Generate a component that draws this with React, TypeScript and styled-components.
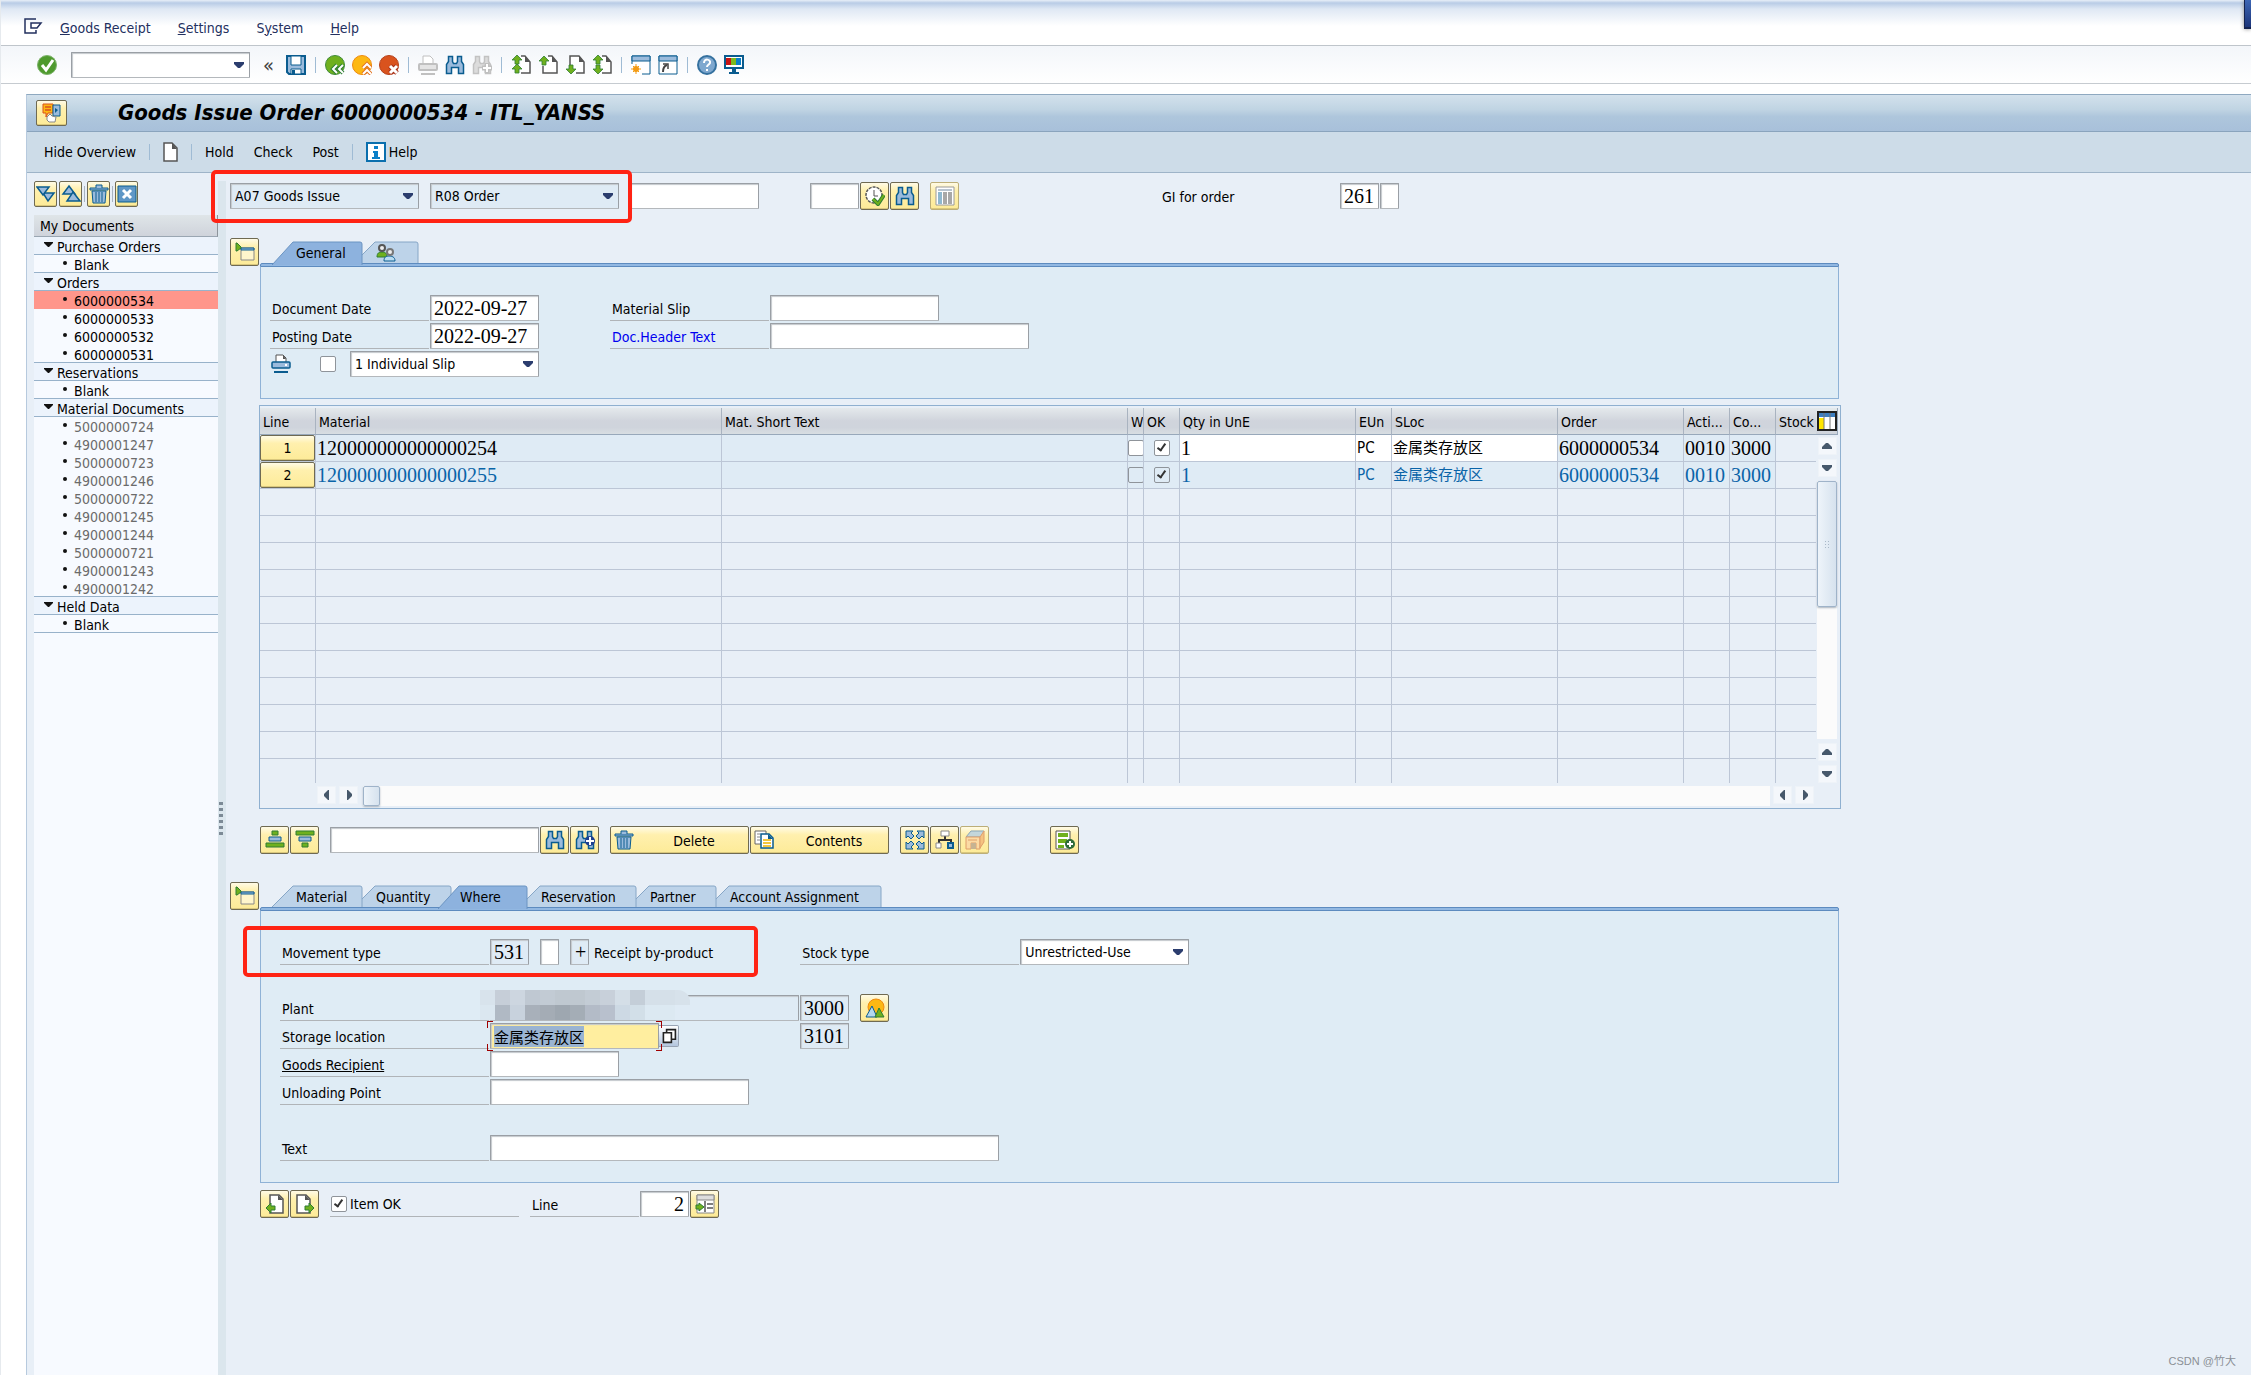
import React, { useEffect, useRef } from "react";
import styled, { createGlobalStyle, css } from "styled-components";

const sans = `"DejaVu Sans Condensed", "Noto Sans CJK SC", sans-serif`;
const serif = `"Liberation Serif", "Noto Sans CJK SC", serif`;

const Global = createGlobalStyle`
  *, *::before, *::after { box-sizing: border-box; }
  body { margin: 0; background: #fff; }
  button, input, select { font: inherit; color: inherit; margin: 0; }
  svg { display: block; flex: none; }
`;

/* ---------- icons ---------- */

const B = "#0a5c8f";
const L = "#9bbbdc";
const G = "#6fb01e";
const DG = "#2e7d32";
const K = "#555";

const up = (x: number, y: number) => `M${x} ${y}l5 5h-3v4h-4v-4h-3z`;
const down = (x: number, y: number) => `M${x} ${y}l5-5h-3v-4h-4v4h-3z`;
const binoculars = "M1.5 18.5v-9l2-3v-5h4v5l1 2h3l1-2v-5h4v5l2 3v9h-5v-6h-7v6z";
const fold = "M14 1l5 6h-5z";

const art: Record<string, React.ReactNode> = {
  menu: (
    <g fill="none" stroke="#23305f" strokeWidth="1.5">
      <path d="M13 3H2v14h11v-3" />
      <path d="M8 7h10l-4 5H8z" fill="#fff" />
    </g>
  ),
  ok: (
    <>
      <circle cx="10" cy="10" r="9.5" fill="#4f9a2e" stroke="#7cb36a" />
      <path d="M5 10l4 5 7-10" fill="none" stroke="#fff" strokeWidth="3" />
    </>
  ),
  save: (
    <>
      <path d="M1 1h18v18H3l-2-2z" fill={L} stroke={B} strokeWidth="2" />
      <path d="M5 1h10v9H5z" fill="#fff" stroke={B} />
      <path d="M5 14h10v5H5z" fill="#fff" stroke={B} />
      <path d="M6 15h3v4H6z" fill={B} />
    </>
  ),
  back: (
    <>
      <circle cx="10" cy="10" r="9.5" fill={G} stroke="#3f8a3a" />
      <path d="M12 10l-4 4 4 4M18 10l-4 4 4 4" fill="none" stroke={DG} strokeWidth="4" />
      <path d="M12 10l-4 4 4 4M18 10l-4 4 4 4" fill="none" stroke="#fff" strokeWidth="2" />
    </>
  ),
  exit: (
    <>
      <circle cx="10" cy="10" r="9.5" fill="#fdb813" stroke="#ee8a10" />
      <path d="M11 13l4-4 4 4M11 19l4-4 4 4" fill="none" stroke="#e2711d" strokeWidth="4" />
      <path d="M11 13l4-4 4 4M11 19l4-4 4 4" fill="none" stroke="#fff" strokeWidth="2" />
    </>
  ),
  cancel: (
    <>
      <circle cx="10" cy="10" r="9.5" fill="#d9531e" stroke="#b5401a" />
      <path d="M11 11l7 7M18 11l-7 7" stroke="#a8321a" strokeWidth="5" />
      <path d="M11 11l7 7M18 11l-7 7" stroke="#fff" strokeWidth="3" />
    </>
  ),
  printGrey: (
    <g fill="#e4e4e4" stroke="#c0c0c0">
      <path d="M5 8V1h7l3 3v4" fill="#fff" />
      <rect x="1" y="9" width="18" height="6" rx="1" strokeWidth="2" />
      <path d="M3 19h14" strokeWidth="2" />
    </g>
  ),
  print: (
    <g>
      <path d="M5 8V1h7l3 3v4" fill="#fff" stroke={K} />
      <path d="M12 1v4h3z" fill={K} />
      <rect x="1" y="8" width="18" height="6" rx="1" fill={L} stroke={B} strokeWidth="1.5" />
      <path d="M14 11h2" stroke="#fff" strokeWidth="2" />
      <path d="M3 18h14" stroke={B} strokeWidth="2" />
    </g>
  ),
  find: <path d={binoculars} fill={L} stroke={B} strokeWidth="1.5" />,
  findGrey: (
    <>
      <path d={binoculars} fill="#dcdcdc" stroke="#c2c2c2" strokeWidth="1.5" />
      <path d="M15 8v10M10 13h10" stroke="#c0c0c0" strokeWidth="5" />
      <path d="M15 9v8M11 13h8" stroke="#fff" strokeWidth="2" />
    </>
  ),
  findNext: (
    <>
      <path d={binoculars} fill={L} stroke={B} strokeWidth="1.5" />
      <circle cx="15" cy="11" r="5" fill="#1d3f8f" />
      <path d="M15 7v8M11 11h8" stroke="#fff" strokeWidth="2" />
    </>
  ),
  firstPage: (
    <>
      <path d="M10 1h4l5 6v11h-9" fill="#fff" stroke={K} strokeWidth="1.5" />
      <path d={fold} fill={K} />
      <path d={`${up(6, 0)}${up(6, 9)}`} fill={G} stroke={DG} strokeWidth="0.8" />
    </>
  ),
  prevPage: (
    <>
      <path d="M10 1h4l5 6v11H5v-7" fill="#fff" stroke={K} strokeWidth="1.5" />
      <path d={fold} fill={K} />
      <path d={up(6, 1)} fill={G} stroke={DG} strokeWidth="0.8" />
    </>
  ),
  nextPage: (
    <>
      <path d="M5 10V1h9l5 6v11h-8" fill="#fff" stroke={K} strokeWidth="1.5" />
      <path d={fold} fill={K} />
      <path d={down(6, 19)} fill={G} stroke={DG} strokeWidth="0.8" />
    </>
  ),
  lastPage: (
    <>
      <path d="M10 1h4l5 6v11h-9" fill="#fff" stroke={K} strokeWidth="1.5" />
      <path d={fold} fill={K} />
      <path d={`${up(6, 0)}${down(6, 19)}`} fill={G} stroke={DG} strokeWidth="0.8" />
    </>
  ),
  newSession: (
    <>
      <path d="M1 1h18v18H1z" fill="#fff" stroke={B} />
      <path d="M1 1h18v5H1z" fill={L} stroke={B} />
      <path d="M0 9h11v11H0z" fill="#fff" />
      <circle cx="5" cy="14" r="3" fill="#f39a12" />
      <path d="M5 9v10M0 14h10M2 11l6 6M8 11l-6 6" stroke="#f39a12" />
    </>
  ),
  shortcut: (
    <>
      <path d="M1 1h18v18H1z" fill="#fff" stroke={B} />
      <path d="M1 1h18v5H1z" fill={L} stroke={B} />
      <path d="M5 17c0-4 1-6 4-7" fill="none" stroke="#444" strokeWidth="2" />
      <path d="M5 9h5v5" fill="none" stroke="#444" strokeWidth="1.5" />
    </>
  ),
  help: (
    <>
      <circle cx="10" cy="10" r="9" fill="#7fa8cf" stroke="#35719f" strokeWidth="2" />
      <path d="M7 8c0-5 7-4 6 0-1 2-3 2-3 4M10 14v2" fill="none" stroke="#fff" strokeWidth="2" />
    </>
  ),
  monitor: (
    <>
      <path d="M0 0h20v14H0z" fill={B} />
      <path d="M2 2h16v10H2z" fill="#fff" />
      <path d="M2 3h5v7H2z" fill="#c81414" />
      <path d="M7 3h5v7H7z" fill="#7cba1e" />
      <path d="M12 3h5v7h-5z" fill="#0a7fc8" />
      <path d="M8 14h4v3h3v2H5v-2h3z" fill={B} />
    </>
  ),
  menuBox: (
    <>
      <path d="M1 1h10v9H6l-2 4v-4H1z" fill="#fdb813" stroke="#d9531e" />
      <path d="M3 4h6M3 7h6" stroke="#d9531e" strokeWidth="1.5" />
      <path d="M11 2h7v11h-7z" fill={L} stroke={B} />
      <path d="M13 5l3 2-3 3z" fill={B} />
      <path d="M5 17v-3l3-3 2 2 4 1-1 5H7z" fill="#fff" stroke="#888" />
    </>
  ),
  blankPage: (
    <>
      <path d="M4 1h8l5 5v13H4z" fill="#fff" stroke={K} strokeWidth="1.5" />
      <path d="M12 1v6h5z" fill={K} />
    </>
  ),
  info: (
    <>
      <path d="M1 1h18v18H1z" fill="#fff" stroke="#0a6fae" strokeWidth="2" />
      <path d="M8 4h4v3H8zM7 9h5v6h2v2H6v-2h2v-4H7z" fill="#0a7fc8" />
    </>
  ),
  expandAll: (
    <g fill={L} stroke={B} strokeWidth="1.5">
      <path d="M7 9h11l-6 8z" />
      <path d="M1 3h12l-6 8z" />
    </g>
  ),
  collapseAll: (
    <g fill={L} stroke={B} strokeWidth="1.5">
      <path d="M2 10h12L8 2z" />
      <path d="M6 17h13l-7-9z" />
    </g>
  ),
  trash: (
    <g fill={L} stroke={B}>
      <path d="M3 7h14l-1 12H4z" />
      <path d="M1 4h18v2H1z" />
      <path d="M7 4V1h6v3" />
      <path d="M7 8v10M10 8v10M13 8v10" stroke={B} />
    </g>
  ),
  closeBox: (
    <>
      <path d="M1 2h18v16H1z" fill="#5f97c6" stroke={B} />
      <path d="M6 6l8 8M14 6l-8 8" stroke="#fff" strokeWidth="3" />
    </>
  ),
  clock: (
    <>
      <circle cx="9" cy="9" r="8" fill="#fff" stroke={K} strokeWidth="1.5" strokeDasharray="3 1" />
      <path d="M9 4v6h4" fill="none" stroke={K} />
      <path d="M8 13l5 5 6-9" fill="none" stroke={DG} strokeWidth="4" />
      <path d="M8 13l5 5 6-9" fill="none" stroke={G} strokeWidth="2" />
    </>
  ),
  grid: (
    <>
      <path d="M1 1h18v18H1z" fill="#fff" stroke="#9a9a9a" />
      <path d="M3 3h14v2H3z" fill="#b8c4d0" />
      <path d="M3 6h4v12H3z" fill="#8fb8cf" />
      <path d="M8 6h4v12H8zM13 6h4v12h-4z" fill="#a8a8a8" />
    </>
  ),
  detail: (
    <>
      <path d="M6 6h13v12H6z" fill="#fff6cc" stroke="#888" />
      <path d="M6 6h13v2H6z" fill={L} stroke={B} />
      <path d="M1 1h1l4 4v1l-4 3H1z" fill={G} stroke={DG} />
    </>
  ),
  people: (
    <>
      <path d="M1 14c0-4 2-5 5-5s5 1 5 5z" fill={G} stroke={DG} />
      <circle cx="6" cy="5" r="3" fill="#eee" stroke={K} strokeWidth="2" />
      <path d="M8 18c0-4 2-5 5-5s6 1 6 5z" fill="#b9dcf2" stroke={B} />
      <circle cx="14" cy="9" r="3" fill="#eee" stroke="#777" strokeWidth="2" />
    </>
  ),
  insertTop: (
    <>
      <path d="M7 1h6v4H7z" fill={G} stroke={DG} />
      <path d="M4 7h12v4H4z" fill={L} stroke={B} />
      <path d="M1 13h18v4H1z" fill={G} stroke={DG} />
    </>
  ),
  insertBottom: (
    <>
      <path d="M1 1h18v4H1z" fill={G} stroke={DG} />
      <path d="M4 7h12v4H4z" fill={L} stroke={B} />
      <path d="M7 13h6v4H7z" fill={G} stroke={DG} />
    </>
  ),
  contents: (
    <>
      <path d="M1 1h11v13H1z" fill="#fff" stroke="#666" />
      <path d="M3 4h3M3 7h3M3 10h3" stroke="#888" />
      <path d="M7 4h8l4 4v10H7z" fill="#fff" stroke={B} strokeWidth="1.5" />
      <path d="M14 4v5h5z" fill={B} />
      <path d="M9 10h8M9 13h8M9 16h8" stroke="#f0b400" strokeWidth="1.5" />
    </>
  ),
  spread: (
    <g fill={L} stroke={B}>
      <path d="M1 1h7L6 3l3 3-3 3-3-3-2 2z" />
      <path d="M19 1h-7l2 2-3 3 3 3 3-3 2 2z" />
      <path d="M1 19h7l-2-2 3-3-3-3-3 3-2-2z" />
      <path d="M19 19h-7l2-2-3-3 3-3 3 3 2-2z" />
    </g>
  ),
  tree: (
    <>
      <path d="M10 6v4M4 13v-3h12v3" fill="none" stroke="#333" strokeWidth="2" />
      <path d="M6 1h8v5H6z" fill="#fff" stroke="#888" />
      <path d="M1 13h5v5H1z" fill="#fff" stroke="#888" />
      <path d="M13 13h5v5h-5z" fill={L} stroke={B} strokeWidth="2" />
    </>
  ),
  box: (
    <g opacity="0.8">
      <path d="M1 7l5-6h13l-3 6z" fill="#b5d0e5" stroke="#6f93b2" />
      <path d="M1 7h14v12h-4v-6H6v6H1z" fill="#fbd7a5" stroke="#d98c5c" />
      <path d="M6 13h5v6H6z" fill="#b9a58f" />
      <path d="M3 10h9" stroke="#d98c5c" />
      <path d="M15 7l4-6v11l-4 6z" fill="#f3b877" stroke="#d98c5c" />
    </g>
  ),
  addList: (
    <>
      <path d="M1 1h14v18H1z" fill="#fff" stroke={K} />
      <path d="M3 3h10v4H3zM3 9h9v4H3zM3 15h6v3H3z" fill={G} />
      <circle cx="15" cy="14" r="5" fill="#2c6b3a" />
      <path d="M15 11v6M12 14h6" stroke="#fff" strokeWidth="2" />
    </>
  ),
  landscape: (
    <>
      <circle cx="11" cy="9" r="8" fill="#fdb813" stroke="#f08a10" />
      <path d="M1 19l6-11 5 11z" fill="#b5d8ee" stroke={B} />
      <path d="M10 19l4-9 5 9z" fill={G} stroke={DG} />
    </>
  ),
  prevItem: (
    <>
      <path d="M5 1h9l4 4v14H5z" fill="#fff" stroke={K} strokeWidth="1.5" />
      <path d="M13 1v5h5z" fill={K} />
      <path d="M1 14l5-5v3h4v4H6v3z" fill={G} stroke={DG} />
    </>
  ),
  nextItem: (
    <>
      <path d="M2 1h9l4 4v14H2z" fill="#fff" stroke={K} strokeWidth="1.5" />
      <path d="M10 1v5h5z" fill={K} />
      <path d="M19 14l-5-5v3h-4v4h4v3z" fill={G} stroke={DG} />
    </>
  ),
  gotoLine: (
    <>
      <path d="M2 1h17v18H2z" fill="#fff" stroke="#888" />
      <path d="M2 1h17v5H2z" fill="#ddd" stroke="#888" />
      <path d="M10 7v11M12 10h6M12 14h6" stroke={K} strokeWidth="1.5" />
      <path d="M9 13l-5-4v2H1v4h3v2z" fill={G} stroke={DG} />
    </>
  ),
  f4: (
    <g fill="#fff" stroke="#222" strokeWidth="2">
      <path d="M7 2h11v12H7z" />
      <path d="M3 6h10v12H3z" />
    </g>
  ),
  config: (
    <>
      <path d="M1 1h18v18H1z" fill="#fff" stroke="#222" strokeWidth="2" />
      <path d="M2 7h5v11H2z" fill="#ffe500" />
      <path d="M2 2h16v4H2z" fill="#3f7fc0" />
      <path d="M7 2v16M13 2v16" stroke="#777" />
    </>
  ),
};

const Icon = ({ name, size = 20 }: { name: string; size?: number }) => (
  <svg width={size} height={size} viewBox="0 0 20 20" aria-hidden="true">
    {art[name]}
  </svg>
);

/* ---------- window chrome ---------- */

const Page = styled.div`
  position: relative;
  display: flex;
  flex-direction: column;
  min-height: 100vh;
  overflow: hidden;
  background: #fff;
  border-left: 1px solid #e6eaee;
  font: 14px/18px ${sans};
  color: #000;
`;

const MenuBar = styled.nav`
  display: flex;
  align-items: center;
  gap: 27px;
  height: 46px;
  padding: 10px 24px 0 22px;
  border-bottom: 1px solid #bfc5cb;
  background: linear-gradient(#e8eff8 0, #b9cce6 3px, #dfe8f4 9px, #fff 26px);
`;

const MenuIcon = styled.div`
  margin: -4px -10px 0 0;
`;

const MenuItem = styled.a`
  color: #23305f;
  text-decoration: none;
`;

const Toolbar = styled.div`
  display: flex;
  align-items: center;
  gap: 7px;
  height: 38px;
  padding: 0 36px;
  border-bottom: 1px solid #c6cbd0;
  background: linear-gradient(#f3f6fa, #fff);
`;

const FlatButton = styled.button`
  display: flex;
  align-items: center;
  gap: 3px;
  padding: 0;
  border: 0;
  background: none;
`;

const EnterButton = styled(FlatButton)`
  margin-right: 7px;
`;

const Collapse = styled(FlatButton)`
  margin: 0 4px 0 6px;
  width: 12px;
  font-size: 20px;
  color: #444;
`;

const Separator = styled.i`
  width: 1px;
  height: 16px;
  margin: 0 2px;
  background: #9fbbd4;
`;

const Corner = styled.div`
  position: absolute;
  top: 0;
  right: 0;
  width: 7px;
  height: 29px;
  background: linear-gradient(#3d66b5, #1b3479);
  border-left: 1px solid #14234f;
  border-bottom: 2px solid #14234f;
  box-shadow: 0 0 4px #888;
`;

const Frame = styled.div`
  flex: 1;
  display: flex;
  flex-direction: column;
  margin: 10px 0 0 25px;
  border-left: 1px solid #b7cade;
  border-top: 1px solid #8fa9c0;
  background: #e8eff7;
`;

const TitleBar = styled.header`
  display: flex;
  align-items: center;
  gap: 51px;
  height: 37px;
  padding: 0 9px;
  border-bottom: 1px solid #8aa4bd;
  background: linear-gradient(#d3e1ec, #c0d4e3 40%, #aec6dc 60%, #a8c0da);
`;

const Title = styled.h1`
  margin: 0;
  font: italic bold 22px/30px ${sans};
`;

const AppBar = styled.div`
  display: flex;
  align-items: center;
  gap: 11px;
  height: 41px;
  padding: 0 17px;
  border-bottom: 1px solid #9eb4c8;
  background: #cddce8;
`;

const AppActions = styled.div`
  display: flex;
  gap: 20px;
`;

/* ---------- shared controls ---------- */

const YellowButton = styled.button<{ $w?: number; $h?: number; $dim?: boolean }>`
  display: flex;
  flex: none;
  align-items: center;
  justify-content: center;
  width: ${(p) => p.$w ?? 29}px;
  height: ${(p) => p.$h ?? 28}px;
  padding: 0;
  border: 1px solid ${(p) => (p.$dim ? "#bcae78" : "#6f6a52")};
  border-radius: 2px;
  background: linear-gradient(#fffbe6, #fff0ae 30%, #fdeb98);
  box-shadow: inset 0 -1px 0 #d9c77c;
`;

const ActionButton = styled(YellowButton)`
  justify-content: flex-start;
  padding-left: 3px;
`;

const ActionText = styled.span`
  flex: 1;
  padding: 2px 0 0 6px;
  text-align: center;
`;

const Field = styled.input<{ $n: number; $tone?: "read" | "focus"; $face?: "sans"; $right?: boolean }>`
  flex: none;
  width: ${(p) => p.$n * 10 - 1}px;
  height: 26px;
  padding: 0 ${(p) => (p.$right ? 4 : 0)}px 0 ${(p) => (p.$n < 3 ? 4 : 3)}px;
  border: 1px solid #9a9fa5;
  border-bottom-color: #b4b8bc;
  border-radius: 1px;
  outline: 0;
  box-shadow: inset 1px 1px 1px #c4c8cc;
  background: ${(p) => (p.$tone === "read" ? "#dfebf5" : p.$tone === "focus" ? "#ffee9f" : "#fff")};
  font: ${(p) => (p.$face === "sans" ? `15px/20px ${sans}` : `20px/22px ${serif}`)};
  text-align: ${(p) => (p.$right ? "right" : "left")};
  &::selection {
    background: #9ab4d2;
    color: #000;
  }
`;

const SelectWrap = styled.span<{ $n: number }>`
  position: relative;
  flex: none;
  width: ${(p) => p.$n * 10 - 1}px;
  height: 26px;
  & > svg {
    position: absolute;
    right: 5px;
    top: 9px;
    pointer-events: none;
  }
`;

const SelectBox = styled.select<{ $read?: boolean }>`
  width: 100%;
  height: 26px;
  padding: 0 20px 0 4px;
  border: 1px solid #9a9fa5;
  border-bottom-color: #b4b8bc;
  border-radius: 1px;
  box-shadow: inset 1px 1px 1px #c4c8cc;
  appearance: none;
  background: ${(p) => (p.$read ? "#dfebf5" : "#fff")};
`;

const Select = ({ n, value, read, label, id }: { n: number; value?: string; read?: boolean; label?: string; id?: string }) => (
  <SelectWrap $n={n}>
    <SelectBox $read={read} aria-label={label} id={id}>
      <option>{value}</option>
    </SelectBox>
    <svg width="12" height="8" viewBox="0 0 12 8" aria-hidden="true">
      <path d="M1 1h10v2L7 7H5L1 3z" fill="#2b3d6e" />
    </svg>
  </SelectWrap>
);

const Check = styled.input.attrs({ type: "checkbox" })<{ $read?: boolean }>`
  position: relative;
  flex: none;
  width: 16px;
  height: 16px;
  appearance: none;
  border: 1px solid #8f949a;
  border-radius: 2px;
  background: ${(p) => (p.$read ? "#dfebf5" : "#fff")};
  &:checked::after {
    content: "";
    position: absolute;
    left: 4px;
    top: 1px;
    width: 5px;
    height: 9px;
    border: solid #333;
    border-width: 0 2px 2px 0;
    transform: rotate(35deg);
  }
`;

const Callout = styled.i<{ $x: number; $y: number; $w: number; $h: number }>`
  position: absolute;
  left: ${(p) => p.$x}px;
  top: ${(p) => p.$y}px;
  width: ${(p) => p.$w}px;
  height: ${(p) => p.$h}px;
  border: 4px solid #ff2314;
  border-radius: 5px;
  pointer-events: none;
  z-index: 30;
`;

/* ---------- overview tree ---------- */

const Body = styled.div`
  flex: 1;
  display: flex;
  padding-left: 7px;
`;

const Sidebar = styled.aside`
  flex: none;
  display: flex;
  flex-direction: column;
  width: 184px;
  padding-top: 8px;
`;

const SideTools = styled.div`
  display: flex;
  align-items: center;
  gap: 2px;
  height: 26px;
`;

const SideSep = styled.i`
  width: 1px;
  height: 16px;
  background: #a8b4c0;
`;

const TreeTitle = styled.h2`
  margin: 8px 0 0;
  height: 22px;
  padding-left: 6px;
  border-right: 1px solid #8d949b;
  border-bottom: 1px solid #9aa6b2;
  background: linear-gradient(#dfe5e8, #cfd3db);
  font: 14px/22px ${sans};
`;

const Tree = styled.ul`
  flex: 1;
  margin: 0;
  padding: 0;
  list-style: none;
  background: #f7faff;
  line-height: 20px;
  & ul {
    margin: 0;
    padding: 0;
    list-style: none;
    border-bottom: 1px solid #98b2ca;
  }
`;

const Group = styled.div`
  display: flex;
  gap: 4px;
  height: 18px;
  padding-left: 10px;
  border-bottom: 1px solid #98b2ca;
  background: #ecf3fc;
  & > svg {
    margin-top: 4px;
  }
`;

const Leaf = styled.li<{ $mark?: boolean; $grey?: boolean }>`
  height: 18px;
  padding-left: 40px;
  background: ${(p) => (p.$mark ? "#ff968b" : "none")};
  color: ${(p) => (p.$grey ? "#6b6b6b" : "#000")};
  &::before {
    content: "";
    float: left;
    width: 4px;
    height: 4px;
    margin: 6px 0 0 -11px;
    border-radius: 2px;
    background: #111;
  }
  &:last-child {
    height: 17px;
  }
`;

const Splitter = styled.div`
  flex: none;
  display: flex;
  align-items: flex-start;
  width: 8px;
  margin-top: 8px;
  padding: 621px 0 0 1px;
  background: #dbe6ed;
`;

const Grip = styled.i`
  width: 4px;
  height: 35px;
  background: repeating-linear-gradient(#7c8a96 0 3px, transparent 3px 6px);
`;

const groups = [
  { name: "Purchase Orders", items: ["Blank"] },
  { name: "Orders", items: ["6000000534", "6000000533", "6000000532", "6000000531"] },
  { name: "Reservations", items: ["Blank"] },
  {
    name: "Material Documents",
    grey: true,
    items: ["5000000724", "4900001247", "5000000723", "4900001246", "5000000722", "4900001245", "4900001244", "5000000721", "4900001243", "4900001242"],
  },
  { name: "Held Data", items: ["Blank"] },
];

/* ---------- work area ---------- */

const Main = styled.main`
  flex: 1;
  min-width: 0;
  max-width: 1615px;
  padding: 9px 0 0 4px;
`;

const Bar = styled.div<{ $indent?: boolean; $top?: number }>`
  position: relative;
  display: flex;
  align-items: center;
  gap: 1px;
  height: 28px;
  margin: ${(p) => p.$top ?? 0}px 0 0 ${(p) => (p.$indent ? 30 : 0)}px;
`;

const Space = styled.i<{ $n: number }>`
  flex: none;
  width: ${(p) => p.$n * 10 - 1}px;
`;

const Section = styled.section<{ $top: number }>`
  display: flex;
  align-items: flex-start;
  gap: 1px;
  margin: ${(p) => p.$top}px 2px 0 0;
`;

const TabBox = styled.div`
  flex: 1;
`;

const Tabs = styled.div`
  display: flex;
  align-items: flex-end;
  height: 25px;
  padding-left: 21px;
`;

const TabButton = styled.button<{ $w: number; $z: number; $on?: boolean; $lap: number; $pad: number }>`
  position: relative;
  z-index: ${(p) => p.$z};
  display: flex;
  align-items: center;
  width: ${(p) => p.$w}px;
  height: ${(p) => (p.$on ? 24 : 22)}px;
  margin: 0 0 ${(p) => (p.$on ? -2 : 0)}px -${(p) => p.$lap}px;
  padding: 2px 0 ${(p) => (p.$on ? 2 : 0)}px ${(p) => p.$pad}px;
  border: 0;
  background: none;
  white-space: nowrap;
  & > svg:first-child {
    position: absolute;
    left: 0;
    top: 0;
    z-index: -1;
  }
`;

const Tab = ({ w, z, on, lap = 9, pad = 22, children }: { w: number; z: number; on?: boolean; lap?: number; pad?: number; children: React.ReactNode }) => {
  const h = on ? 24 : 22;
  return (
    <TabButton $w={w} $z={on ? 20 : z} $on={on} $lap={lap} $pad={pad} role="tab" aria-selected={!!on}>
      <svg width={w} height={h} aria-hidden="true">
        <path
          d={`M0 ${h}L21 1H${w - 3}Q${w - 1} 1 ${w - 1} 3V${h}`}
          fill={on ? "#8db2de" : "#bdd3e9"}
          stroke={on ? "#6b94c2" : "#86a6c6"}
        />
      </svg>
      {children}
    </TabButton>
  );
};

const TabPanel = styled.div<{ $pad: number }>`
  position: relative;
  display: flex;
  flex-direction: column;
  gap: 2px;
  padding: 28px 0 21px ${(p) => p.$pad}px;
  border: 1px solid #8fb2d6;
  border-top: 0;
  background: #dfecf5;
`;

const TabLine = styled.div`
  height: 4px;
  border: 1px solid #5d8bbf;
  border-radius: 2px 2px 0 0;
  background: #92b8e2;
`;

const FormRow = styled.div<{ $gap?: boolean }>`
  position: relative;
  display: flex;
  align-items: center;
  gap: 1px;
  height: 26px;
  margin-top: ${(p) => (p.$gap ? 28 : 0)}px;
`;

const Label = styled.label<{ $n: number; $look?: "blue" | "under"; $bare?: boolean }>`
  flex: none;
  width: ${(p) => p.$n * 10 - 1}px;
  height: 26px;
  padding: 5px 0 0 2px;
  border-bottom: ${(p) => (p.$bare ? 0 : 1)}px solid #b0b4b8;
  color: ${(p) => (p.$look === "blue" ? "#0000f0" : "#000")};
  text-decoration: ${(p) => (p.$look === "under" ? "underline" : "none")};
`;

const CheckLabel = styled.label`
  display: flex;
  align-items: center;
  gap: 3px;
  width: 189px;
  height: 26px;
  padding-left: 1px;
  border-bottom: 1px solid #b0b4b8;
`;

const PrintCell = styled.span`
  display: flex;
  align-items: center;
  justify-content: space-between;
  width: 65px;
  margin: 0 13px 0 1px;
`;

const Note = styled.span`
  padding: 2px 0 0 4px;
`;

const StockType = styled.span`
  display: flex;
  gap: 1px;
  margin-left: 86px;
`;

const FocusWrap = styled.span`
  position: relative;
  display: flex;
  &::before,
  &::after {
    content: "";
    position: absolute;
    top: -2px;
    bottom: -2px;
    width: 6px;
    pointer-events: none;
    background: linear-gradient(#a00000 0 0) top / 100% 1px no-repeat, linear-gradient(#a00000 0 0) bottom / 100% 1px no-repeat,
      linear-gradient(#a00000 0 0) 0 0 / 1px 7px no-repeat, linear-gradient(#a00000 0 0) 0 100% / 1px 7px no-repeat;
  }
  &::before {
    left: -3px;
  }
  &::after {
    right: -3px;
    transform: scaleX(-1);
  }
`;

const MatchButton = styled.button`
  display: flex;
  align-items: center;
  justify-content: center;
  width: 20px;
  height: 22px;
  padding: 0;
  margin-left: -1px;
  border: 1px solid #98a4b4;
  border-left: 0;
  border-radius: 0 2px 2px 0;
  background: linear-gradient(#fff, #b3c6de);
`;

const Mosaic = styled.i`
  position: absolute;
  left: 200px;
  top: -5px;
  z-index: 2;
  display: grid;
  grid-template-columns: repeat(14, 15px);
  grid-auto-rows: 15px;
  border-radius: 0 12px 8px 0;
  overflow: hidden;
`;

const Pixel = styled.b<{ $c: string }>`
  background: ${(p) => p.$c};
`;

const mosaic = [
  "#d8e3ec", "#c6ced8", "#cdd6e0", "#bfc8d2", "#c2cbd4", "#bfc8d0", "#bfc8d0", "#c3ccd5", "#c8d0da", "#d4dee7", "#c4ced8", "#d5e0e9", "#d5e0e9", "#d7e2eb",
  "#dbe7f0", "#b0b9c4", "#c8d2dd", "#a8b0ba", "#a4acb5", "#9ea7b0", "#a4adb6", "#b3bbc7", "#b8c0cd", "#cdd9e4", "#d2dfe8", "#dce9f2", "#dce9f2", "#dfebf5",
];

/* ---------- item table ---------- */

const TableFrame = styled.div`
  margin: 6px 0 0 29px;
  padding: 2px 0;
  border: 1px solid #8fb0d0;
`;

const TableRow = styled.div`
  display: flex;
`;

const Grid = styled.table`
  flex: none;
  width: 1556px;
  table-layout: fixed;
  border-collapse: separate;
  border-spacing: 0;
`;

const Th = styled.th`
  height: 27px;
  padding: 1px 0 0 3px;
  overflow: hidden;
  border-right: 1px solid #a9b3c0;
  border-bottom: 1px solid #98a8ba;
  background: linear-gradient(#e4e9ec, #d0d4dc 50%, #cfd4dc 75%, #d8dee2);
  font-weight: normal;
  text-align: left;
  white-space: nowrap;
  &:last-child {
    border-right: 0;
  }
`;

const Td = styled.td<{ $bg?: string; $blue?: boolean; $face?: "sans"; $mid?: boolean }>`
  height: 27px;
  padding: 0 0 0 ${(p) => (p.$mid ? 0 : 1)}px;
  overflow: hidden;
  border-right: 1px solid #bcc6d6;
  border-bottom: 1px solid #bcc6d6;
  background: ${(p) => p.$bg ?? "none"};
  color: ${(p) => (p.$blue ? "#0a64a8" : "#000")};
  font: ${(p) => (p.$face === "sans" ? `15px/20px ${sans}` : `20px/22px ${serif}`)};
  white-space: nowrap;
  &:last-child {
    border-right: 0;
  }
  & > input {
    display: block;
    margin: 0 auto;
  }
`;

const LineTd = styled(Td)`
  padding: 0;
  font: 14px/18px ${sans};
`;

const LastTd = styled(Td)`
  height: 24px;
  border-bottom: 0;
`;

const VScroll = styled.div`
  display: flex;
  flex-direction: column;
  align-items: center;
  gap: 4px;
  width: 22px;
`;

const ConfigButton = styled.button`
  display: flex;
  align-items: center;
  justify-content: center;
  width: 22px;
  height: 27px;
  padding: 0;
  margin-bottom: -2px;
  border: 0;
  border-right: 1px solid #98a8ba;
  border-bottom: 1px solid #98a8ba;
  background: linear-gradient(#e4e9ec, #cfd4dc);
`;

const ArrowButton = styled.button`
  display: flex;
  align-items: center;
  justify-content: center;
  width: 19px;
  height: 18px;
  padding: 0;
  border: 1px solid #eef3f8;
  background: #f4f7fb;
`;

const VTrack = styled.div`
  flex: 1;
  width: 20px;
  background: #fbfbfb;
`;

const thumb = css`
  border: 1px solid #9fb3c9;
  border-radius: 2px;
  background: linear-gradient(90deg, #eef4fa, #d6e2ee);
  box-shadow: 0 1px 2px #aab4be;
`;

const VThumb = styled.div`
  display: flex;
  align-items: center;
  justify-content: center;
  height: 126px;
  ${thumb}
`;

const Dots = styled.i`
  width: 6px;
  height: 9px;
  background: radial-gradient(circle, #a9b8c8 1px, transparent 1px) 0 0 / 3px 3px;
`;

const HScroll = styled.div`
  display: flex;
  gap: 3px;
  margin: 3px 26px 0 57px;
`;

const HTrack = styled.div`
  flex: 1;
  margin-left: 2px;
  background: #fbfbfb;
`;

const HThumb = styled.div`
  width: 17px;
  height: 20px;
  ${thumb}
`;

const Arrow = ({ dir, label }: { dir: "up" | "down" | "left" | "right"; label: string }) => {
  const d = { up: "M0 8V6l4-4h2l4 4v2z", down: "M0 2v2l4 4h2l4-4V2z", left: "M7 0H6L2 4v2l4 4h1z", right: "M3 0h1l4 4v2l-4 4H3z" }[dir];
  return (
    <ArrowButton aria-label={label}>
      <svg width="10" height="10" viewBox="0 0 10 10" aria-hidden="true">
        <path d={d} fill="#46586b" />
      </svg>
    </ArrowButton>
  );
};

const columns: [string, number][] = [
  ["Line", 56],
  ["Material", 406],
  ["Mat. Short Text", 406],
  ["W", 16],
  ["OK", 36],
  ["Qty in UnE", 176],
  ["EUn", 36],
  ["SLoc", 166],
  ["Order", 126],
  ["Acti...", 46],
  ["Co...", 46],
  ["Stock", 40],
];

const items = [
  { line: 1, material: "120000000000000254", open: true },
  { line: 2, material: "120000000000000255", open: false },
];

const tint = "#dfebf5";

const ItemTable = () => (
  <TableFrame>
    <TableRow>
      <Grid>
        <colgroup>
          {columns.map(([name, width]) => (
            <col key={name} width={width} />
          ))}
        </colgroup>
        <thead>
          <tr>
            {columns.map(([name]) => (
              <Th key={name}>{name}</Th>
            ))}
          </tr>
        </thead>
        <tbody>
          {items.map(({ line, material, open }) => {
            const edit = open ? "#fff" : tint;
            return (
              <tr key={line}>
                <LineTd>
                  <YellowButton $w={55} $h={26}>{line}</YellowButton>
                </LineTd>
                <Td $bg={tint} $blue={!open}>{material}</Td>
                <Td $bg={tint} />
                <Td $bg={tint} $mid>
                  <Check aria-label="W" $read={!open} />
                </Td>
                <Td $bg={tint} $mid>
                  <Check aria-label="OK" $read={!open} defaultChecked />
                </Td>
                <Td $bg={edit} $blue={!open}>1</Td>
                <Td $bg={edit} $blue={!open} $face="sans">PC</Td>
                <Td $bg={edit} $blue={!open} $face="sans">金属类存放区</Td>
                <Td $bg={tint} $blue={!open}>6000000534</Td>
                <Td $bg={tint} $blue={!open}>0010</Td>
                <Td $bg={tint} $blue={!open}>3000</Td>
                <Td />
              </tr>
            );
          })}
          {Array.from({ length: 10 }, (_, r) => (
            <tr key={r}>
              {columns.map(([name]) => (
                <Td key={name} />
              ))}
            </tr>
          ))}
          <tr>
            {columns.map(([name]) => (
              <LastTd key={name} />
            ))}
          </tr>
        </tbody>
      </Grid>
      <VScroll>
        <ConfigButton aria-label="Configuration">
          <Icon name="config" />
        </ConfigButton>
        <Arrow dir="up" label="Scroll up" />
        <Arrow dir="down" label="Scroll down" />
        <VTrack>
          <VThumb>
            <Dots />
          </VThumb>
        </VTrack>
        <Arrow dir="up" label="Page up" />
        <Arrow dir="down" label="Page down" />
      </VScroll>
    </TableRow>
    <HScroll>
      <Arrow dir="left" label="Scroll left" />
      <Arrow dir="right" label="Scroll right" />
      <HTrack>
        <HThumb />
      </HTrack>
      <Arrow dir="left" label="Page left" />
      <Arrow dir="right" label="Page right" />
    </HScroll>
  </TableFrame>
);

const IconButton = ({ name, label, dim }: { name: string; label: string; dim?: boolean }) => (
  <YellowButton aria-label={label} $dim={dim}>
    <Icon name={name} />
  </YellowButton>
);

const Watermark = styled.div`
  position: absolute;
  right: 15px;
  bottom: 5px;
  font: 11px/18px "Liberation Sans", "Noto Sans CJK SC", sans-serif;
  color: #8b9096;
`;

const toolGroups = [
  ["save"],
  ["back", "exit", "cancel"],
  ["printGrey", "find", "findGrey"],
  ["firstPage", "prevPage", "nextPage", "lastPage"],
  ["newSession", "shortcut"],
  ["help", "monitor"],
];

export default function App() {
  const storage = useRef<HTMLInputElement>(null);
  useEffect(() => {
    storage.current?.focus();
    storage.current?.select();
  }, []);

  return (
    <Page>
      <Global />
      <MenuBar>
        <MenuIcon>
          <Icon name="menu" />
        </MenuIcon>
        <MenuItem href="#goods"><u>G</u>oods Receipt</MenuItem>
        <MenuItem href="#settings"><u>S</u>ettings</MenuItem>
        <MenuItem href="#system">S<u>y</u>stem</MenuItem>
        <MenuItem href="#help"><u>H</u>elp</MenuItem>
      </MenuBar>
      <Corner />
      <Toolbar>
        <EnterButton aria-label="Enter">
          <Icon name="ok" />
        </EnterButton>
        <Select n={18} label="Command" />
        <Collapse aria-label="Hide command field">«</Collapse>
        {toolGroups.map((names, g) => (
          <React.Fragment key={g}>
            {g > 0 && <Separator />}
            {names.map((name) => (
              <FlatButton key={name} aria-label={name}>
                <Icon name={name} />
              </FlatButton>
            ))}
          </React.Fragment>
        ))}
      </Toolbar>

      <Frame>
        <TitleBar>
          <YellowButton $w={31} $h={26} aria-label="Object services">
            <Icon name="menuBox" />
          </YellowButton>
          <Title>Goods Issue Order 6000000534 - ITL_YANSS</Title>
        </TitleBar>
        <AppBar>
          <FlatButton>Hide Overview</FlatButton>
          <Separator />
          <FlatButton aria-label="Create">
            <svg width="15" height="20" viewBox="3 0 15 20" aria-hidden="true">
              {art.blankPage}
            </svg>
          </FlatButton>
          <Separator />
          <AppActions>
            <FlatButton>Hold</FlatButton>
            <FlatButton>Check</FlatButton>
            <FlatButton>Post</FlatButton>
          </AppActions>
          <Separator />
          <FlatButton>
            <Icon name="info" />
            Help
          </FlatButton>
        </AppBar>

        <Body>
          <Sidebar>
            <SideTools>
              <YellowButton $w={23} $h={26} aria-label="Expand all"><Icon name="expandAll" /></YellowButton>
              <YellowButton $w={23} $h={26} aria-label="Collapse all"><Icon name="collapseAll" /></YellowButton>
              <SideSep />
              <YellowButton $w={23} $h={26} aria-label="Delete entry"><Icon name="trash" /></YellowButton>
              <SideSep />
              <YellowButton $w={23} $h={26} aria-label="Close overview"><Icon name="closeBox" /></YellowButton>
            </SideTools>
            <TreeTitle>My Documents</TreeTitle>
            <Tree>
              {groups.map(({ name, items: leaves, grey }) => (
                <li key={name}>
                  <Group>
                    <svg width="9" height="8" viewBox="0 0 9 8" aria-hidden="true">
                      <path d="M0 1h9v1L5 6H4L0 2z" fill="#111" />
                    </svg>
                    {name}
                  </Group>
                  <ul>
                    {leaves.map((leaf) => (
                      <Leaf key={leaf} $grey={grey} $mark={leaf === "6000000534"}>
                        {leaf}
                      </Leaf>
                    ))}
                  </ul>
                </li>
              ))}
            </Tree>
          </Sidebar>
          <Splitter>
            <Grip />
          </Splitter>

          <Main>
            <Bar>
              <Select n={19} value="A07 Goods Issue" read label="Action" />
              <Space $n={1} />
              <Select n={19} value="R08 Order" read label="Reference document" />
              <Space $n={1} />
              <Field $n={13} aria-label="Order number" />
              <Space $n={5} />
              <Field $n={5} aria-label="Item" />
              <IconButton name="clock" label="Execute" />
              <IconButton name="find" label="Find" />
              <Space $n={1} />
              <IconButton name="grid" label="Layout" dim />
              <Space $n={20} />
              <Label $n={18} $bare htmlFor="gi">GI for order</Label>
              <Field $n={4} id="gi" defaultValue="261" />
              <Field $n={2} aria-label="Special stock" />
              <Callout $x={-19} $y={-12} $w={421} $h={53} />
            </Bar>

            <Section $top={28}>
              <IconButton name="detail" label="Close header" />
              <TabBox>
                <Tabs role="tablist">
                  <Tab w={91} z={2} on pad={24}>General</Tab>
                  <Tab w={65} z={1}>
                    <Icon name="people" />
                  </Tab>
                </Tabs>
                <TabLine />
                <TabPanel $pad={9} role="tabpanel">
                  <FormRow>
                    <Label $n={16} htmlFor="docdate">Document Date</Label>
                    <Field $n={11} id="docdate" defaultValue="2022-09-27" />
                    <Space $n={7} />
                    <Label $n={16} htmlFor="slip">Material Slip</Label>
                    <Field $n={17} id="slip" />
                  </FormRow>
                  <FormRow>
                    <Label $n={16} htmlFor="postdate">Posting Date</Label>
                    <Field $n={11} id="postdate" defaultValue="2022-09-27" />
                    <Space $n={7} />
                    <Label $n={16} $look="blue" htmlFor="header">Doc.Header Text</Label>
                    <Field $n={26} id="header" />
                  </FormRow>
                  <FormRow>
                    <PrintCell>
                      <Icon name="print" />
                      <Check aria-label="Print via output control" />
                    </PrintCell>
                    <Select n={19} value="1 Individual Slip" label="Slip type" />
                  </FormRow>
                </TabPanel>
              </TabBox>
            </Section>

            <ItemTable />

            <Bar $indent $top={17}>
              <IconButton name="insertTop" label="Sort ascending" />
              <IconButton name="insertBottom" label="Sort descending" />
              <Space $n={1} />
              <Field $n={21} aria-label="Search items" />
              <IconButton name="find" label="Find item" />
              <IconButton name="findNext" label="Find next" />
              <Space $n={1} />
              <ActionButton $w={139}>
                <Icon name="trash" />
                <ActionText>Delete</ActionText>
              </ActionButton>
              <ActionButton $w={139}>
                <Icon name="contents" />
                <ActionText>Contents</ActionText>
              </ActionButton>
              <Space $n={1} />
              <IconButton name="spread" label="Distribute quantity" />
              <IconButton name="tree" label="Hierarchy" />
              <IconButton name="box" label="Packaging" dim />
              <Space $n={6} />
              <IconButton name="addList" label="New item" />
            </Bar>

            <Section $top={28}>
              <IconButton name="detail" label="Close detail" />
              <TabBox>
                <Tabs role="tablist">
                  <Tab w={91} z={6} pad={24}>Material</Tab>
                  <Tab w={98} z={5}>Quantity</Tab>
                  <Tab w={90} z={4} on lap={14}>Where</Tab>
                  <Tab w={118} z={3}>Reservation</Tab>
                  <Tab w={89} z={2}>Partner</Tab>
                  <Tab w={174} z={1}>Account Assignment</Tab>
                </Tabs>
                <TabLine />
                <TabPanel $pad={19} role="tabpanel">
                  <FormRow>
                    <Label $n={21} htmlFor="move">Movement type</Label>
                    <Field $n={4} $tone="read" id="move" defaultValue="531" readOnly />
                    <Space $n={1} />
                    <Field $n={2} aria-label="Stock indicator" />
                    <Space $n={1} />
                    <Field $n={2} $tone="read" aria-label="Sign" defaultValue="+" readOnly />
                    <Note>Receipt by-product</Note>
                    <Callout $x={-37} $y={-13} $w={515} $h={51} />
                    <StockType>
                      <Label $n={22} htmlFor="stock">Stock type</Label>
                      <Select n={17} value="Unrestricted-Use" id="stock" />
                    </StockType>
                  </FormRow>
                  <FormRow $gap>
                    <Label $n={21} htmlFor="plant">Plant</Label>
                    <Field $n={31} $tone="read" id="plant" readOnly />
                    <Field $n={5} $tone="read" aria-label="Plant code" defaultValue="3000" readOnly />
                    <Space $n={1} />
                    <IconButton name="landscape" label="Plant address" />
                    <Mosaic>
                      {mosaic.map((c, i) => (
                        <Pixel key={i} $c={c} />
                      ))}
                    </Mosaic>
                  </FormRow>
                  <FormRow>
                    <Label $n={21} htmlFor="storage">Storage location</Label>
                    <FocusWrap>
                      <Field ref={storage} $n={17} $tone="focus" $face="sans" id="storage" defaultValue="金属类存放区" />
                    </FocusWrap>
                    <MatchButton aria-label="Value help">
                      <Icon name="f4" size={16} />
                    </MatchButton>
                    <Space $n={12} />
                    <Field $n={5} $tone="read" aria-label="Storage code" defaultValue="3101" readOnly />
                  </FormRow>
                  <FormRow>
                    <Label $n={21} $look="under" htmlFor="recipient">Goods Recipient</Label>
                    <Field $n={13} id="recipient" />
                  </FormRow>
                  <FormRow>
                    <Label $n={21} htmlFor="unloading">Unloading Point</Label>
                    <Field $n={26} id="unloading" />
                  </FormRow>
                  <FormRow $gap>
                    <Label $n={21} htmlFor="text">Text</Label>
                    <Field $n={51} id="text" />
                  </FormRow>
                </TabPanel>
              </TabBox>
            </Section>

            <Bar $indent $top={7}>
              <IconButton name="prevItem" label="Previous item" />
              <IconButton name="nextItem" label="Next item" />
              <Space $n={1} />
              <CheckLabel>
                <Check defaultChecked />
                Item OK
              </CheckLabel>
              <Space $n={1} />
              <Label $n={11} htmlFor="line">Line</Label>
              <Field $n={5} $right id="line" defaultValue="2" />
              <IconButton name="gotoLine" label="Go to line" />
            </Bar>
          </Main>
        </Body>
      </Frame>
      <Watermark>CSDN @竹大</Watermark>
    </Page>
  );
}
